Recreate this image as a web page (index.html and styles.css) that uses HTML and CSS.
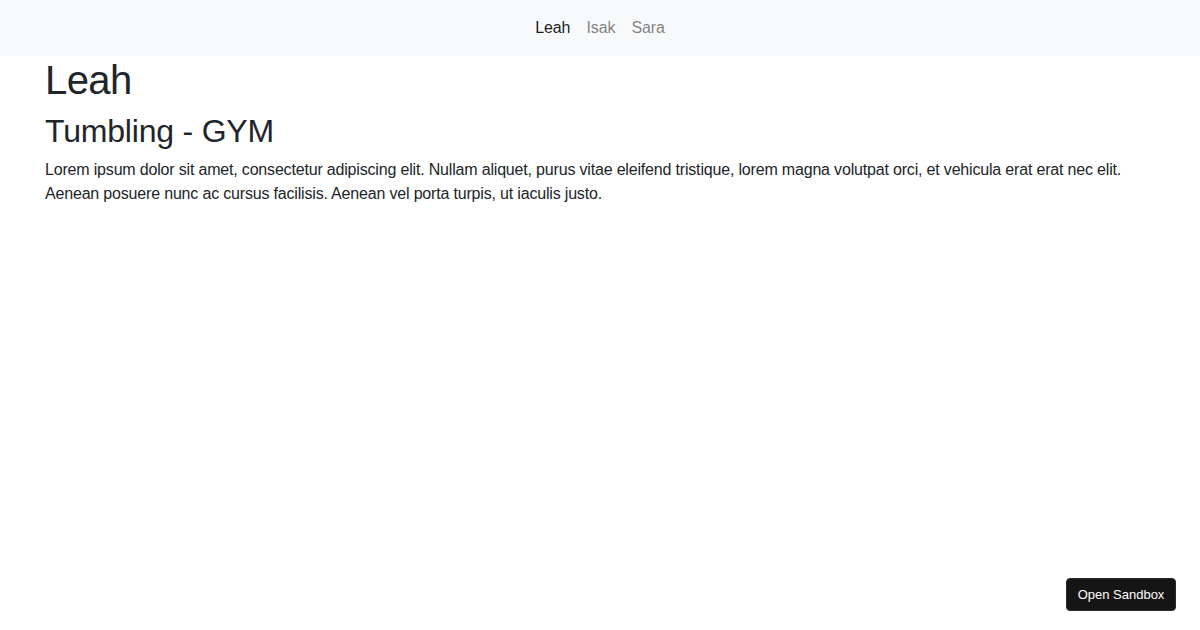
FILE: index.html
```html
<!DOCTYPE html>
<html>
<head>
<meta charset="utf-8">
<link rel="stylesheet" href="styles.css">
</head>
<body>
<nav class="navbar">
  <ul class="nav">
    <li><a class="nav-link active" href="#">Leah</a></li>
    <li><a class="nav-link" href="#">Isak</a></li>
    <li><a class="nav-link" href="#">Sara</a></li>
  </ul>
</nav>
<main class="container">
  <h1 class="title">Leah</h1>
  <h2 class="subtitle">Tumbling - GYM</h2>
  <p class="text">Lorem ipsum dolor sit amet, consectetur adipiscing elit. Nullam aliquet, purus vitae eleifend tristique, lorem magna volutpat orci, et vehicula erat erat nec elit. Aenean posuere nunc ac cursus facilisis. Aenean vel porta turpis, ut iaculis justo.</p>
</main>
<a class="sandbox-btn" href="#">Open Sandbox</a>
</body>
</html>
```
FILE: styles.css
```css
* { box-sizing: border-box; }
html, body { margin: 0; padding: 0; }
body {
  font-family: "Liberation Sans", Arial, sans-serif;
  font-size: 16px;
  line-height: 1.5;
  color: #212529;
  background: #fff;
}
.navbar {
  background: #f8f9fa;
  padding: 8px 16px;
  display: flex;
  justify-content: center;
}
.nav {
  list-style: none;
  margin: 0;
  padding: 0;
  display: flex;
}
.nav-link {
  display: block;
  padding: 8px 8px;
  text-decoration: none;
  color: rgba(0,0,0,0.5);
  letter-spacing: -0.1px;
}
.nav-link.active { color: rgba(0,0,0,0.9); }
.container {
  max-width: 1140px;
  margin: 0 auto;
  padding: 0 15px;
}
.title {
  font-size: 40px;
  font-weight: 500;
  line-height: 1.2;
  margin: 0 0 8px;
  letter-spacing: -0.6px;
}
.subtitle {
  font-size: 32px;
  font-weight: 500;
  line-height: 1.2;
  margin: 0 0 8px;
  letter-spacing: -0.2px;
}
.text {
  margin: 0 0 16px;
  letter-spacing: -0.18px;
}
.sandbox-btn {
  position: fixed;
  right: 24px;
  bottom: 19px;
  width: 110px;
  height: 33px;
  display: flex;
  align-items: center;
  justify-content: center;
  background: #151515;
  color: #fff;
  border: 1px solid #2a2a2a;
  border-radius: 4px;
  font-size: 13px;
  text-decoration: none;
}
```
